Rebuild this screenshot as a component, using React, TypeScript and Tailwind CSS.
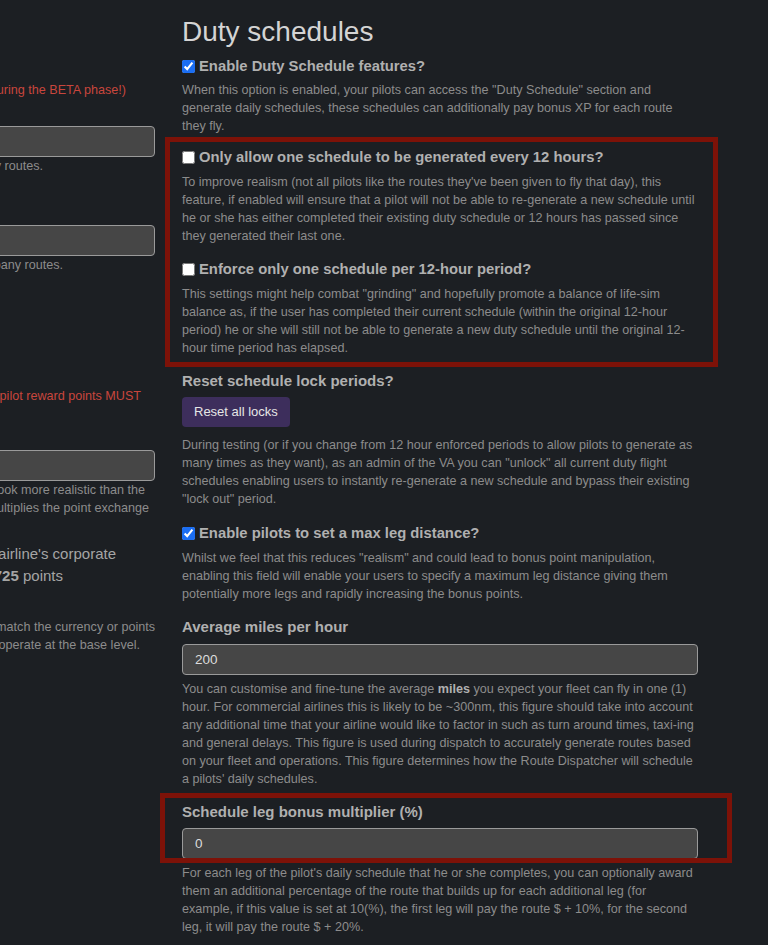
import React from 'react';

const Check = ({checked, label}: { checked?: boolean, label: string }) => (
    <label className="flex items-center gap-[4px] text-[14.8px] leading-[20px] font-bold text-[#b0b0b0]">
        <input type="checkbox" defaultChecked={checked} className="w-[13px] h-[13px] m-0 accent-[#1b6ef3]"/>
        <span>{label}</span>
    </label>
);

const Help = ({children, className = ''}: { children: React.ReactNode, className?: string }) => (
    <p className={`text-[12.6px] leading-[18px] text-[#8c8c8c] ${className}`}>{children}</p>
);

const Heading = ({children, className = ''}: { children: React.ReactNode, className?: string }) => (
    <h3 className={`text-[15px] leading-[20px] font-bold text-[#b0b0b0] ${className}`}>{children}</h3>
);

const Field = ({value, className = ''}: { value: string, className?: string }) => (
    <input readOnly value={value}
           className={`block w-full h-[31px] rounded-[4px] border border-[#9a9a9a] bg-[#464646] px-[12px] text-[13.5px] text-[#dcdcdc] outline-none ${className}`}/>
);

// the left column is cut by the viewport, lines end at the given right gap
const CutLine = ({children, gap, className = ''}: { children: React.ReactNode, gap: number, className?: string }) => (
    <div className={`flex justify-end ${className}`} style={{paddingRight: gap}}>
        <span className="whitespace-nowrap">{children}</span>
    </div>
);

export default function App() {
    return (
        <div className="relative min-h-screen overflow-hidden bg-[#1c1f23] font-['Liberation_Sans',Arial,sans-serif]">
            <div className="flex gap-[27px]">
                <div className="w-[155px] shrink-0 overflow-hidden text-[12.6px] leading-[18px] text-[#8c8c8c] pt-[81px]">
                    <CutLine gap={29} className="text-[#c9463d]">Route dispatcher is free to use during the BETA phase!)</CutLine>
                    <div className="mt-[27px] -ml-[30px]"><Field value=""/></div>
                    <CutLine gap={112}>The maximum distance for any routes.</CutLine>
                    <div className="mt-[50px] -ml-[30px]"><Field value=""/></div>
                    <CutLine gap={92}>The minimum distance for company routes.</CutLine>
                    <CutLine gap={14} className="mt-[113px] text-[#c9463d]">Please note that the pilot reward points MUST</CutLine>
                    <div className="mt-[45px] -ml-[30px]"><Field value=""/></div>
                    <CutLine gap={10}>This makes the value look more realistic than the</CutLine>
                    <CutLine gap={6}>actual figure as it multiplies the point exchange</CutLine>
                    <div className="mt-[26px] text-[15px] leading-[22px] text-[#a5a5a5]">
                        <CutLine gap={39}>Your airline's corporate</CutLine>
                        <CutLine gap={92}><b>1,725</b> points</CutLine>
                    </div>
                    <CutLine gap={0} className="mt-[31px]">Ensure this value is set to match the currency or points</CutLine>
                    <CutLine gap={15}>you wish your airline to operate at the base level.</CutLine>
                </div>

                <div className="w-[516px] shrink-0 pt-[15px] pb-[20px]">
                    <h2 className="text-[28px] leading-[34px] text-[#d4d4d4]">Duty schedules</h2>

                    <div className="mt-[7px]"><Check checked label="Enable Duty Schedule features?"/></div>
                    <Help className="mt-[5px]">When this option is enabled, your pilots can access the "Duty Schedule" section and
                        generate daily schedules, these schedules can additionally pay bonus XP for each route
                        they fly.</Help>

                    <div className="mt-[12px]"><Check label="Only allow one schedule to be generated every 12 hours?"/></div>
                    <Help className="mt-[6px]">To improve realism (not all pilots like the routes they've been given to fly that day), this
                        feature, if enabled will ensure that a pilot will not be able to re-generate a new schedule until
                        he or she has either completed their existing duty schedule or 12 hours has passed since
                        they generated their last one.</Help>

                    <div className="mt-[14px]"><Check label="Enforce only one schedule per 12-hour period?"/></div>
                    <Help className="mt-[6px]">This settings might help combat "grinding" and hopefully promote a balance of life-sim
                        balance as, if the user has completed their current schedule (within the original 12-hour
                        period) he or she will still not be able to generate a new duty schedule until the original 12-
                        hour time period has elapsed.</Help>

                    <Heading className="mt-[14px]">Reset schedule lock periods?</Heading>
                    <button className="mt-[6px] h-[30px] px-[12px] rounded-[4px] bg-[#3d2e5c] text-[13px] text-[#e6e6e6]">Reset all locks</button>
                    <Help className="mt-[9px]">During testing (or if you change from 12 hour enforced periods to allow pilots to generate as
                        many times as they want), as an admin of the VA you can "unlock" all current duty flight
                        schedules enabling users to instantly re-generate a new schedule and bypass their existing
                        "lock out" period.</Help>

                    <div className="mt-[15px]"><Check checked label="Enable pilots to set a max leg distance?"/></div>
                    <Help className="mt-[6px]">Whilst we feel that this reduces "realism" and could lead to bonus point manipulation,
                        enabling this field will enable your users to specify a maximum leg distance giving them
                        potentially more legs and rapidly increasing the bonus points.</Help>

                    <Heading className="mt-[14px]">Average miles per hour</Heading>
                    <Field value="200" className="mt-[7px]"/>
                    <Help className="mt-[5px]">You can customise and fine-tune the average <b className="text-[#b0b0b0]">miles</b> you expect your fleet can fly in one (1)
                        hour. For commercial airlines this is likely to be ~300nm, this figure should take into account
                        any additional time that your airline would like to factor in such as turn around times, taxi-ing
                        and general delays. This figure is used during dispatch to accurately generate routes based
                        on your fleet and operations. This figure determines how the Route Dispatcher will schedule
                        a pilots' daily schedules.</Help>

                    <Heading className="mt-[14px]">Schedule leg bonus multiplier (%)</Heading>
                    <Field value="0" className="mt-[6px]"/>
                    <Help className="mt-[5px]">For each leg of the pilot's daily schedule that he or she completes, you can optionally award
                        them an additional percentage of the route that builds up for each additional leg (for
                        example, if this value is set at 10(%), the first leg will pay the route $ + 10%, for the second
                        leg, it will pay the route $ + 20%.</Help>
                </div>
            </div>

            {/* annotation boxes drawn over the form */}
            <div className="pointer-events-none absolute left-[165px] top-[137px] w-[553px] h-[230px] border-[5px] border-[#7d1208]"/>
            <div className="pointer-events-none absolute left-[160px] top-[793px] w-[572px] h-[70px] border-[5px] border-[#7d1208]"/>
        </div>
    );
}
